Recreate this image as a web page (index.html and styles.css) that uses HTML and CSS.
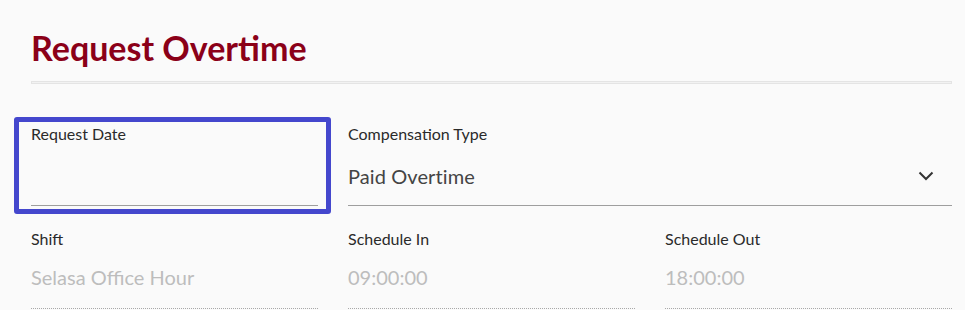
FILE: index.html
```html
<!DOCTYPE html>
<html lang="en">
<head>
<meta charset="utf-8">
<title>Request Overtime</title>
<link rel="stylesheet" href="styles.css">
</head>
<body>
<main class="page">
  <h1 class="title">Request Overtime</h1>
  <hr class="divider">
  <form class="form">
    <div class="field field-focus">
      <label class="label">Request Date</label>
      <div class="control"><span class="value"></span></div>
      <span class="focus-ring"></span>
    </div>
    <div class="field span-2">
      <label class="label">Compensation Type</label>
      <div class="control">
        <span class="value">Paid Overtime</span>
        <svg class="chevron" width="16" height="10" viewBox="0 0 16 10"><path d="M1.5 1.5 L8 8 L14.5 1.5" fill="none" stroke="#333" stroke-width="2"/></svg>
      </div>
    </div>
    <div class="field disabled">
      <label class="label">Shift</label>
      <div class="control"><span class="value">Selasa Office Hour</span></div>
    </div>
    <div class="field disabled">
      <label class="label">Schedule In</label>
      <div class="control"><span class="value">09:00:00</span></div>
    </div>
    <div class="field disabled">
      <label class="label">Schedule Out</label>
      <div class="control"><span class="value">18:00:00</span></div>
    </div>
  </form>
</main>
</body>
</html>
```
FILE: styles.css
```css
html, body {
  margin: 0;
  padding: 0;
  background: #fafafa;
  font-family: Lato, "Open Sans", sans-serif;
}
.page {
  padding: 28px 13px 0 31px;
}
.title {
  margin: 0;
  font-size: 34px;
  font-weight: 700;
  line-height: 40px;
  color: #8b0018;
}
.divider {
  margin: 13px 0 0 0;
  height: 1px;
  border: 1px solid #e4e4e4;
  background: #f2f2f2;
}
.form {
  margin-top: 40px;
  display: grid;
  grid-template-columns: repeat(3, 1fr);
  column-gap: 30px;
  row-gap: 23px;
}
.field {
  position: relative;
  display: flex;
  flex-direction: column;
}
.span-2 {
  grid-column: span 2;
}
.label {
  font-size: 16px;
  line-height: 20px;
  color: #2a2a2a;
}
.control {
  display: flex;
  align-items: center;
  justify-content: space-between;
  height: 62px;
  padding-top: 2px;
  box-sizing: border-box;
  border-bottom: 1px solid #9e9e9e;
}
.value {
  font-size: 20px;
  color: #444;
  letter-spacing: 0.1px;
}
.chevron {
  margin-right: 18px;
}
.disabled .control {
  height: 60px;
  padding-top: 0;
  padding-bottom: 4px;
  border-bottom: 1px dotted #a8a8a8;
}
.disabled .value {
  color: #bdbdbd;
  letter-spacing: 0;
}
.focus-ring {
  position: absolute;
  left: -17px;
  right: -13px;
  top: -7px;
  bottom: -8px;
  border: 5px solid #4447cd;
  border-radius: 3px;
  pointer-events: none;
}
```
